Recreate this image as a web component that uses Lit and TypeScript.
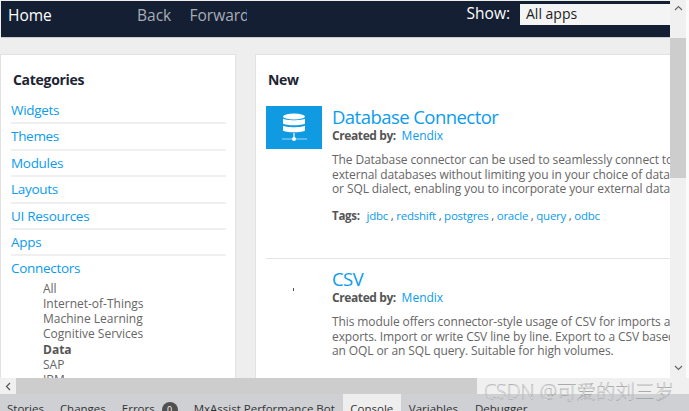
import { LitElement, html, css, svg } from "lit";
import { customElement } from "lit/decorators.js";

const dbIcon = svg`<svg class="dbicon" viewBox="0 0 56 43" width="56" height="43">
  <rect width="56" height="43" fill="#0f9ae2"/>
  <ellipse cx="28" cy="10.500" rx="11" ry="3" fill="#fff"/>
  <path d="M17 12.500c2 2.300 20 2.300 22 0v5c-2 2.400-20 2.400-22 0z" fill="#fff"/>
  <path d="M17 19.500c2 2.300 20 2.300 22 0v5c-2 2.400-20 2.400-22 0z" fill="#fff"/>
  <rect x="27.400" y="27" width="1.200" height="6" fill="#fff"/>
  <rect x="16" y="32.500" width="25" height="1" fill="#9fd6f3"/>
  <circle cx="28" cy="33" r="2" fill="#fff"/>
</svg>`;

@customElement("app-root")
export class AppRoot extends LitElement {
  static styles = css`
    :host {
      display: block;
      width: 689px;
      height: 411px;
      overflow: hidden;
      position: relative;
      font-family: "Open Sans", "Noto Sans", sans-serif;
      background: #eee;
    }
    .main { display: flex; height: 378px; }
    .viewport {
      width: 670px;
      flex: none;
      height: 378px;
      overflow: hidden;
      display: flex;
      flex-direction: column;
    }
    .header {
      flex: none;
      height: 36px;
      margin: 1px 0 1px 1px;
      padding-left: 7px;
      background: #141f33;
      color: #fff;
      display: flex;
      box-shadow: 0 1px 0 #ccc;
      white-space: nowrap;
    }
    .home { font-size: 15.500px; line-height: 29px; width: 129px; }
    .nav { font-size: 15.500px; line-height: 29px; color: #a9adb5; width: 52.500px; }
    .forward { width: 57px; overflow: hidden; flex: none; }
    .spacer { flex: 1; }
    .show { font-size: 15.500px; line-height: 24px; margin-right: 10px; }
    .select {
      width: 150px;
      height: 21px;
      margin-top: 3px;
      background: #f4f4f4;
      color: #1d1d1d;
      font-size: 14px;
      line-height: 20px;
      padding-left: 6px;
      box-sizing: border-box;
      flex: none;
    }
    .content {
      flex: 1;
      display: flex;
      gap: 21px;
      padding: 17px 0 0 1px;
      min-height: 0;
      background: #eee;
    }
    .card {
      background: #fff;
      box-shadow: 0 0 0 1px #e2e2e2;
      overflow: hidden;
      height: 400px;
    }
    .left { width: 234px; flex: none; padding: 16px 10px 0 10px; box-sizing: border-box; }
    .right { flex: 1; padding: 16px 0 0 10px; box-sizing: border-box; white-space: nowrap; }
    h2 {
      margin: 0;
      font-size: 14px;
      font-weight: 700;
      line-height: 18px;
      color: #1d2433;
      letter-spacing: -0.300px;
    }
    .left h2 { padding-left: 2px; margin-bottom: 9px; }
    a { color: #0c9bee; text-decoration: none; }
    .cat {
      display: block;
      font-size: 13.500px;
      letter-spacing: -0.300px;
      line-height: 19px;
      padding: 3px 0 2.400px;
      border-bottom: 2px solid #f0f0f0;
      width: 215px;
    }
    .cat.last { border: 0; padding-bottom: 0; }
    .sub { padding-left: 32px; padding-top: 2.500px; }
    .sub div { font-size: 12px; line-height: 15.200px; color: #666; }
    .sub .on { font-weight: 700; color: #555; }
    .right h2 { padding-left: 2px; margin-bottom: 17px; }
    .app { display: flex; gap: 10px; }
    .app.first { height: 152px; border-bottom: 1px solid #e4e4e4; margin-bottom: 9px; }
    .dbicon { flex: none; display: block; }
    .pic { width: 56px; height: 43px; flex: none; position: relative; }
    .pic i { position: absolute; left: 27px; top: 20px; width: 1px; height: 3px; background: #555; }
    .title { font-size: 18.500px; letter-spacing: -0.550px; line-height: 24px; margin-top: -1px; display: block; }
    .by { font-size: 12px; line-height: 16px; color: #555; font-weight: 700; margin-top: -1px; letter-spacing: -0.400px; }
    .by a { font-weight: 400; margin-left: 3px; letter-spacing: 0; }
    .desc { font-size: 12px; letter-spacing: -0.100px; line-height: 14.700px; color: #666; margin-top: 9px; }
    .tags { font-size: 11.500px; letter-spacing: -0.250px; line-height: 16px; color: #555; margin-top: 11px; }
    .tags b { margin-right: 4px; }
    .vscroll {
      width: 19px;
      flex: none;
      height: 378px;
      background: #f0f0f0;
      border-right: 3px solid #fbfbfb;
      box-sizing: border-box;
      display: flex;
      flex-direction: column;
      align-items: center;
    }
    .btn { flex: none; display: block; }
    .vbtn { height: 38px; width: 16px; display: flex; justify-content: center; padding-top: 5px; box-sizing: border-box; }
    .thumb { width: 16px; height: 140px; background: #cdcdcd; flex: none; }
    .vspace { flex: 1; }
    .vdown { height: 13px; width: 16px; display: flex; justify-content: center; }
    .hscroll { height: 16px; display: flex; background: #f0f0f0; }
    .hbtn { width: 16px; flex: none; display: flex; align-items: center; justify-content: center; }
    .hthumb { width: 461px; background: #cdcdcd; flex: none; }
    .tabs {
      height: 17px;
      background: #ced0d4;
      display: flex;
      padding-left: 7px;
      font-size: 11.500px;
      line-height: 29px;
      color: #333;
      white-space: nowrap;
      overflow: hidden;
    }
    .tab { margin-right: 16px; display: flex; flex: none; }
    .tab.tight { margin-right: 8px; }
    .tab.active {
      background: #eee;
      margin: 0 8px 0 0;
      padding: 0 7.500px;
    }
    .tab.wide { margin-right: 17px; }
    .tab .badge {
      width: 16px; height: 16px; border-radius: 50%;
      background: #505050; color: #fff; font-size: 9px; line-height: 16px;
      text-align: center; margin-left: 7px; margin-top: 8px;
    }
    .mark {
      position: absolute;
      left: 484px;
      top: 380px;
      font-size: 19.500px;
      line-height: 24px;
      color: rgba(255, 255, 255, 0.75);
      -webkit-text-stroke: 0.250px #6e6e6e;
      white-space: nowrap;
      font-family: "Open Sans", "Noto Sans CJK SC", sans-serif;
      font-weight: 300;
    }
  `;

  render() {
    const cats = ["Widgets", "Themes", "Modules", "Layouts", "UI Resources", "Apps"];
    const subs = ["All", "Internet-of-Things", "Machine Learning", "Cognitive Services", "Data", "SAP", "IBM"];
    const tags = ["jdbc", "redshift", "postgres", "oracle", "query", "odbc"];
    return html`
      <div class="main">
        <div class="viewport">
          <div class="header">
            <div class="home">Home</div>
            <div class="nav">Back</div>
            <div class="nav forward">Forward</div>
            <div class="spacer"></div>
            <div class="show">Show:</div>
            <div class="select">All apps</div>
          </div>
          <div class="content">
            <div class="card left">
              <h2>Categories</h2>
              ${cats.map((c) => html`<a class="cat" href="#">${c}</a>`)}
              <a class="cat last" href="#">Connectors</a>
              <div class="sub">
                ${subs.map((s) => html`<div class=${s === "Data" ? "on" : ""}>${s}</div>`)}
              </div>
            </div>
            <div class="card right">
              <h2>New</h2>
              <div class="app first">
                ${dbIcon}
                <div>
                  <a class="title" href="#">Database Connector</a>
                  <div class="by">Created by: <a href="#">Mendix</a></div>
                  <div class="desc">
                    The Database connector can be used to seamlessly connect to<br />
                    external databases without limiting you in your choice of database<br />
                    or SQL dialect, enabling you to incorporate your external data.
                  </div>
                  <div class="tags">
                    <b>Tags:</b>
                    ${tags.map((t, i) => html`<a href="#">${t}</a>${i < tags.length - 1 ? " , " : ""}`)}
                  </div>
                </div>
              </div>
              <div class="app">
                <div class="pic"><i></i></div>
                <div>
                  <a class="title" href="#">CSV</a>
                  <div class="by">Created by: <a href="#">Mendix</a></div>
                  <div class="desc">
                    This module offers connector-style usage of CSV for imports and<br />
                    exports. Import or write CSV line by line. Export to a CSV based on<br />
                    an OQL or an SQL query. Suitable for high volumes.
                  </div>
                </div>
              </div>
            </div>
          </div>
        </div>
        <div class="vscroll">
          <div class="vbtn">
            <svg class="btn" width="9" height="6" viewBox="0 0 9 6"><path d="M1 5l3.500-3.500L8 5" fill="none" stroke="#666" stroke-width="1.200"/></svg>
          </div>
          <div class="thumb"></div>
          <div class="vspace"></div>
          <div class="vdown">
            <svg class="btn" width="9" height="6" viewBox="0 0 9 6"><path d="M1 1l3.500 3.500L8 1" fill="none" stroke="#666" stroke-width="1.200"/></svg>
          </div>
        </div>
      </div>
      <div class="hscroll">
        <div class="hbtn">
          <svg class="btn" width="6" height="9" viewBox="0 0 6 9"><path d="M5 1L1.500 4.500 5 8" fill="none" stroke="#555" stroke-width="1.200"/></svg>
        </div>
        <div class="hthumb"></div>
      </div>
      <div class="tabs">
        <div class="tab">Stories</div>
        <div class="tab">Changes</div>
        <div class="tab">Errors<span class="badge">0</span></div>
        <div class="tab tight">MxAssist Performance Bot</div>
        <div class="tab active">Console</div>
        <div class="tab wide">Variables</div>
        <div class="tab">Debugger</div>
      </div>
      <div class="mark">CSDN @可爱的刘三岁</div>
    `;
  }
}
